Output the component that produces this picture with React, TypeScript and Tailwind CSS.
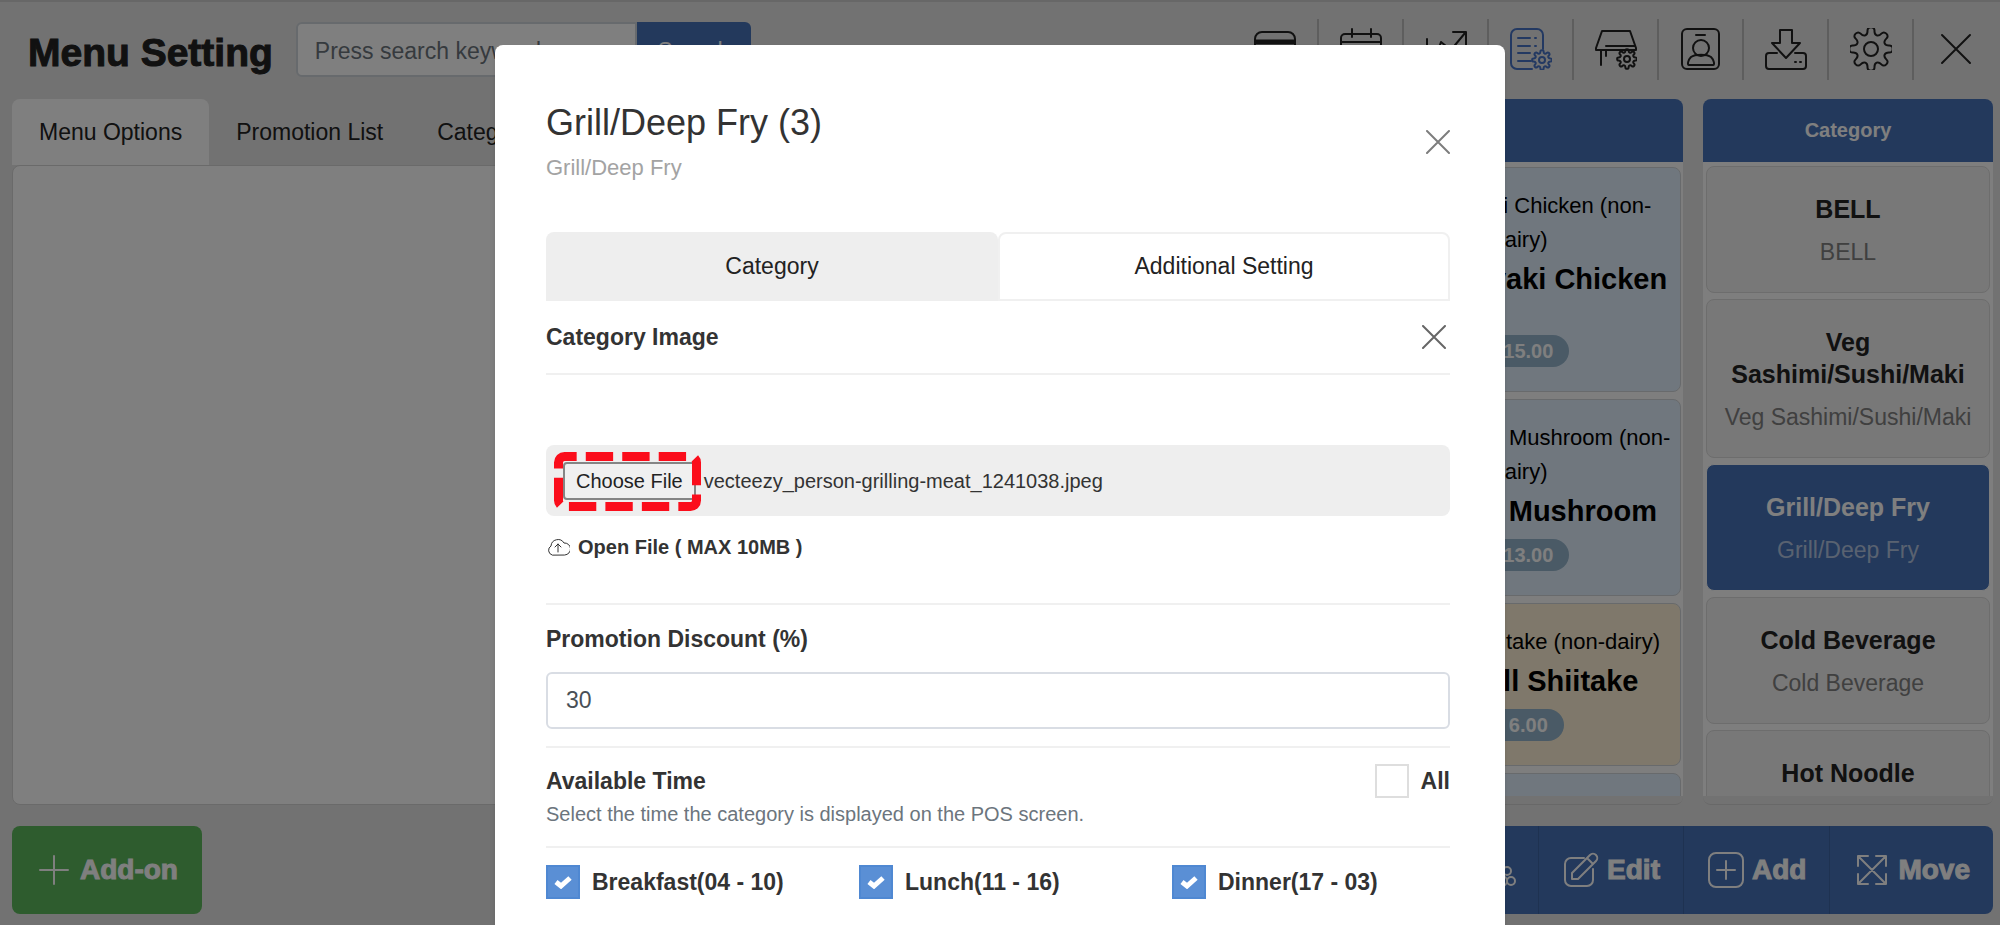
import React, { useRef, useState } from 'react'

// Rounded gear outline, smoothed through the midpoints of its corner points
const gearPath = (cx: number, cy: number, inner: number, outer: number, teeth = 8) => {
  const pts: number[][] = []
  for (let i = 0; i < teeth; i++) {
    const a = (i * 2 * Math.PI) / teeth - Math.PI / 2
    const step = Math.PI / teeth
    const corners = [[-0.58, inner], [-0.42, outer], [0.42, outer], [0.58, inner]]
    corners.forEach(([k, r]) => pts.push([cx + r * Math.cos(a + k * step), cy + r * Math.sin(a + k * step)]))
  }
  const mid = (p: number[], q: number[]) => `${((p[0] + q[0]) / 2).toFixed(2)} ${((p[1] + q[1]) / 2).toFixed(2)}`
  let d = `M${mid(pts[pts.length - 1], pts[0])}`
  pts.forEach((p, i) => {
    d += `Q${p[0].toFixed(2)} ${p[1].toFixed(2)} ${mid(p, pts[(i + 1) % pts.length])}`
  })
  return d + 'Z'
}

const Icon = ({ size = 42, width = 2, children }: { size?: number; width?: number; children: React.ReactNode }) => (
  <svg width={size} height={size} viewBox={`0 0 ${size} ${size}`} fill="none" stroke="currentColor"
    strokeWidth={width} strokeLinecap="round" strokeLinejoin="round" aria-hidden="true" className="shrink-0">
    {children}
  </svg>
)

const toolbar = [
  { label: 'Payment', icon: <><rect x="1" y="4" width="40" height="33" rx="7" /><path d="M1 14h40" strokeWidth="5" /></> },
  { label: 'Calendar', icon: <><rect x="1" y="6" width="40" height="34" rx="4" /><path d="M1 14h40M12 1v8M31 1v8" /></> },
  { label: 'Sales', icon: <path d="M2 11v29h38M10 30l6-16 10 8L40 5M28 4h13v13" /> },
  {
    label: 'Menu setting', active: true,
    icon: (
      <>
        <path d="M22 41H7a6 6 0 0 1-6-6V7a6 6 0 0 1 6-6h20a6 6 0 0 1 6 6v14" />
        <path d="M8 10h12M25 10h1M8 18h12M25 18h1M8 25h12M8 33h13" />
        <path d={gearPath(32, 32, 7, 10)} /><circle cx="32" cy="32" r="3" />
      </>
    ),
  },
  {
    label: 'Table setting',
    icon: (
      <>
        <path d="M7 3h28l6 17v2H1v-2zM11 18h29M6 23v14M11 23v5" />
        <path d={gearPath(32, 31, 7, 10)} /><circle cx="32" cy="31" r="3" />
      </>
    ),
  },
  {
    label: 'Staff',
    icon: (
      <>
        <rect x="2" y="1" width="37" height="40" rx="5" />
        <path d="M16 7h9M9 37c-2 0-1-5 2-8 4-3 16-3 20 0 3 3 4 8 2 8z" /><circle cx="21" cy="20" r="8" />
      </>
    ),
  },
  {
    label: 'Download',
    icon: <><path d="M15 2h12v13h8L21 30 7 15h8z" /><path d="M12 25H4a3 3 0 0 0-3 3v10a3 3 0 0 0 3 3h34a3 3 0 0 0 3-3V28a3 3 0 0 0-3-3h-8M30 34h1M35 34h1" /></>,
  },
  { label: 'Settings', icon: <><path d={gearPath(21, 21, 15, 22)} /><circle cx="21" cy="21" r="7" /></> },
  { label: 'Close', icon: <path d="M7 7l28 28M35 7L7 35" /> },
]

const items = [
  { name: 'Grill Teriyaki Chicken', desc: 'Grill Teriyaki Chicken (non-dairy)', price: '$ 15.00', color: 'bg-[#e0effd]', tall: true },
  { name: 'Veg Grill Mushroom', desc: 'Veg Grill King Mushroom (non-dairy)', price: '$ 13.00', color: 'bg-[#e0effd]' },
  { name: 'Veg Grill Shiitake', desc: 'Veg Grill Shiitake (non-dairy)', price: '$ 6.00', color: 'bg-[#fff1d6]' },
  { name: 'Veg Grill Tofu', desc: 'Veg Grill Tofu (non-dairy)', price: '$ 9.00', color: 'bg-[#e0effd]' },
]

const categories = ['BELL', 'Veg Sashimi/Sushi/Maki', 'Grill/Deep Fry', 'Cold Beverage', 'Hot Noodle']

const actions = [
  { label: 'Edit', icon: <><path d="M21 6H8a6 6 0 0 0-6 6v16a6 6 0 0 0 6 6h16a6 6 0 0 0 6-6V17" /><path d="M9 27v-6L27 3a4 4 0 0 1 6 6L15 27zM24 6l6 6" /></> },
  { label: 'Add', icon: <><rect x="1" y="1" width="34" height="34" rx="7" /><path d="M18 9v18M9 18h18" /></> },
  { label: 'Move', icon: <path d="M4 14V4h10M22 4h10v10M32 22v10H22M14 32H4V22M4 4l28 28M32 4L4 32" /> },
]

const times = ['Breakfast(04 - 10)', 'Lunch(11 - 16)', 'Dinner(17 - 03)']

const Checkbox = ({ label, defaultChecked = false }: { label: string; defaultChecked?: boolean }) => (
  <label className="flex items-center gap-3 text-[23px] leading-[34px] font-bold text-[#333]">
    <span className="grid place-items-center">
      <input type="checkbox" defaultChecked={defaultChecked}
        className="peer col-start-1 row-start-1 h-[34px] w-[34px] appearance-none border-2 border-[#dedede] bg-white checked:border-[#4f88d2] checked:bg-[#5a8fd5]" />
      <svg viewBox="0 0 18 14" className="invisible col-start-1 row-start-1 h-[14px] w-[18px] peer-checked:visible" aria-hidden="true">
        <path d="M2 7l5 4 9-8" fill="none" stroke="#fff" strokeWidth="5" />
      </svg>
    </span>
    {label}
  </label>
)

const CloseIcon = () => (
  <Icon size={24}><path d="M1 1l22 22M23 1L1 23" /></Icon>
)

const CategoryModal = () => {
  const fileRef = useRef<HTMLInputElement>(null)
  const [fileName, setFileName] = useState('vecteezy_person-grilling-meat_1241038.jpeg')

  return (
    <div role="dialog" aria-label="Grill/Deep Fry" className="w-full max-w-[1010px] rounded-t-lg bg-white pt-[56px] pr-[55px] pb-10 pl-[51px] text-[#333] shadow-md">
      <div className="flex items-center justify-between">
        <div>
          <h2 className="text-[36px] leading-[44px]">Grill/Deep Fry (3)</h2>
          <p className="mt-2 text-[22px] leading-[30px] text-[#a3a3a3]">Grill/Deep Fry</p>
        </div>
        <button aria-label="Close dialog" className="text-[#7d7d7d]"><CloseIcon /></button>
      </div>

      <div className="mt-[49px] grid h-[69px] grid-cols-2 text-[23px] text-[#222]">
        <button className="rounded-t-lg bg-[#eee]">Category</button>
        <button className="rounded-t-lg border-2 border-[#f0f0f0]">Additional Setting</button>
      </div>

      {/* Category image */}
      <div className="flex h-[74px] items-center justify-between border-b-2 border-[#f0f0f0]">
        <h3 className="text-[23px] font-bold">Category Image</h3>
        <button aria-label="Remove image" className="mr-1 text-[#666]"><CloseIcon /></button>
      </div>
      <div className="mt-[70px] flex h-[71px] items-center rounded-lg bg-[#eee] pl-[17px] text-[20px]">
        <div className="relative">
          <button onClick={() => fileRef.current?.click()}
            className="h-[38px] rounded-sm border-2 border-[#858585] bg-[#f0f0f0] px-[11px] leading-[30px] text-[#222]">
            Choose File
          </button>
          <svg viewBox="0 0 147 59" className="pointer-events-none absolute -top-[10px] -left-[9px] h-[59px] w-[147px]" aria-hidden="true">
            <rect x="4.5" y="4.5" width="138" height="50" rx="6" fill="none" stroke="#fb0d1b" strokeWidth="9"
              pathLength="360" strokeDasharray="27 9" strokeDashoffset="15" />
          </svg>
        </div>
        <input ref={fileRef} type="file" aria-label="Category image file" className="hidden"
          onChange={e => setFileName(e.target.files?.[0]?.name ?? fileName)} />
        <span className="ml-2">{fileName}</span>
      </div>
      <div className="mt-4 flex items-center gap-2 border-b-2 border-[#f0f0f0] pb-[41px] text-[20px] leading-[30px] font-bold">
        <Icon size={24} width={1}>
          <path d="M6 20a5 5 0 0 1-1-9 7 7 0 0 1 13-3 6 6 0 0 1 1 12zM12 17V9M9 12l3-3 3 3" />
        </Icon>
        Open File ( MAX 10MB )
      </div>

      {/* Discount */}
      <div className="border-b-2 border-[#f0f0f0] py-[17px]">
        <label htmlFor="discount" className="block text-[23px] leading-[34px] font-bold">Promotion Discount (%)</label>
        <input id="discount" type="text" defaultValue="30"
          className="mt-4 h-[57px] w-full rounded-md border-2 border-[#d9dde4] px-[18px] text-[23px] text-[#495057]" />
      </div>

      {/* Available time */}
      <div className="flex items-start justify-between border-b-2 border-[#f0f0f0] py-4">
        <div>
          <h3 className="text-[23px] leading-[34px] font-bold">Available Time</h3>
          <p className="text-[20px] leading-8 text-[#6c757d]">Select the time the category is displayed on the POS screen.</p>
        </div>
        <Checkbox label="All" />
      </div>
      <div className="flex pt-[17px]">
        {times.map(time => (
          <div key={time} className="w-[313px] shrink-0"><Checkbox label={time} defaultChecked /></div>
        ))}
      </div>
    </div>
  )
}

const App = () => {
  const selected = 'Grill/Deep Fry'

  return (
    <div className="relative flex h-screen flex-col overflow-hidden bg-[#e5e5e5] font-['Liberation_Sans',Arial,sans-serif] text-[#222]">
      <header className="flex h-24 shrink-0 items-center border-t-2 border-[#cfcfcf] pr-[3px] pl-7">
        <h1 className="pt-2 text-[39px] leading-10 font-bold [-webkit-text-stroke:1px]">Menu Setting</h1>
        <form className="ml-[23px] flex h-[55px]" onSubmit={e => e.preventDefault()}>
          <input type="search" aria-label="Search" placeholder="Press search keyword"
            className="w-[341px] rounded-l-md border-2 border-[#ced4da] bg-white px-[17px] pt-1 text-[23px] placeholder:text-[#6c757d]" />
          <button className="w-[114px] rounded-r-md bg-[#4672b8] pt-1 text-[23px] text-white">Search</button>
        </form>
        <nav className="ml-auto flex">
          {toolbar.map(({ label, icon, active }, i) => (
            <button key={label} aria-label={label}
              className={`flex h-[61px] w-[85px] items-center justify-center border-[#bdbdbd] ${i > 0 ? 'border-l-2' : ''} ${active ? 'text-[#4672c4]' : 'text-[#222]'}`}>
              <Icon>{icon}</Icon>
            </button>
          ))}
        </nav>
      </header>

      <main className="flex min-h-0 flex-1 gap-5 pt-[3px] pr-[7px] pb-[21px] pl-3">
        <section className="flex min-w-0 flex-1 flex-col">
          <div className="flex h-[66px] text-[23px]">
            <button className="rounded-t-lg bg-white px-[27px]">Menu Options</button>
            <button className="px-[27px]">Promotion List</button>
            <button className="px-[27px]">Category List</button>
          </div>
          <div className="flex-1 rounded-lg border border-[#d5d5d5] bg-white" />
        </section>

        {/* Menu items */}
        <section className="flex w-[326px] flex-col overflow-hidden rounded-lg border-b border-[#d0d0d0] pb-2">
          <h2 className="h-[63px] shrink-0 bg-[#4672b8] px-6 text-[20px] leading-[63px] font-bold text-white">Menu</h2>
          <div className="flex min-h-0 flex-1 flex-col gap-[7px] overflow-hidden bg-[#fcfcfc] px-0.5 pt-[5px]">
            {items.map(item => (
              <button key={item.name}
                className={`flex shrink-0 flex-col items-center rounded-lg border border-[#d0d4d8] px-2 pt-[21px] pb-6 text-black ${item.color}`}>
                <span className="text-[22px] leading-[34px]">{item.desc}</span>
                <span className={`mt-1.5 text-[29px] leading-8 font-bold whitespace-nowrap ${item.tall ? 'min-h-[60px]' : ''}`}>{item.name}</span>
                <span className="mt-3 rounded-full bg-[#94b4cc] px-4 text-[20px] leading-8 font-bold text-white">{item.price}</span>
              </button>
            ))}
          </div>
        </section>

        {/* Categories */}
        <section className="flex w-[290px] flex-col overflow-hidden rounded-lg border-b border-[#d0d0d0] pb-2">
          <h2 className="h-[63px] shrink-0 bg-[#4672b8] text-center text-[20px] leading-[63px] font-bold text-white">Category</h2>
          <div className="flex min-h-0 flex-1 flex-col gap-1.5 overflow-hidden bg-[#fcfcfc] px-[3px] pt-1">
            {categories.map(name => (
              <button key={name}
                className={`shrink-0 rounded-lg border px-3 pt-[26px] pb-[25px] ${name === selected ? 'border-[#fcfcfc] bg-[#4672b8] text-white' : 'border-[#dadada] bg-[#f0f0f0]'}`}>
                <span className="block text-[25px] leading-8 font-bold">{name}</span>
                <span className={`mt-3 block text-[23px] leading-[30px] whitespace-nowrap ${name === selected ? 'text-white/60' : 'text-[#808080]'}`}>{name}</span>
              </button>
            ))}
          </div>
        </section>
      </main>

      <footer className="flex shrink-0 justify-between pr-[7px] pb-[11px] pl-3 text-[28px] font-bold text-white">
        <button className="flex h-[88px] items-center gap-2 rounded-lg bg-[#5cb85c] px-6 [-webkit-text-stroke:1px]">
          <Icon size={36}><path d="M18 4v28M4 18h28" /></Icon>
          Add-on
        </button>
        <div className="flex h-[88px] overflow-hidden rounded-lg bg-[#4672b8]">
          <button aria-label="Group" className="px-[22px]">
            <Icon size={36}>
              <circle cx="27" cy="19" r="4" /><circle cx="22" cy="29" r="5" /><circle cx="31" cy="29" r="4" />
            </Icon>
          </button>
          {actions.map(({ label, icon }) => (
            <button key={label} className="flex items-center gap-2 border-l border-[#3d64a3] pr-[23px] pl-6 [-webkit-text-stroke:1px]">
              <Icon size={36}>{icon}</Icon>
              {label}
            </button>
          ))}
        </div>
      </footer>

      <div className="absolute inset-0 flex items-start justify-center overflow-hidden bg-black/50 pt-[45px]">
        <CategoryModal />
      </div>
    </div>
  )
}

export default App
